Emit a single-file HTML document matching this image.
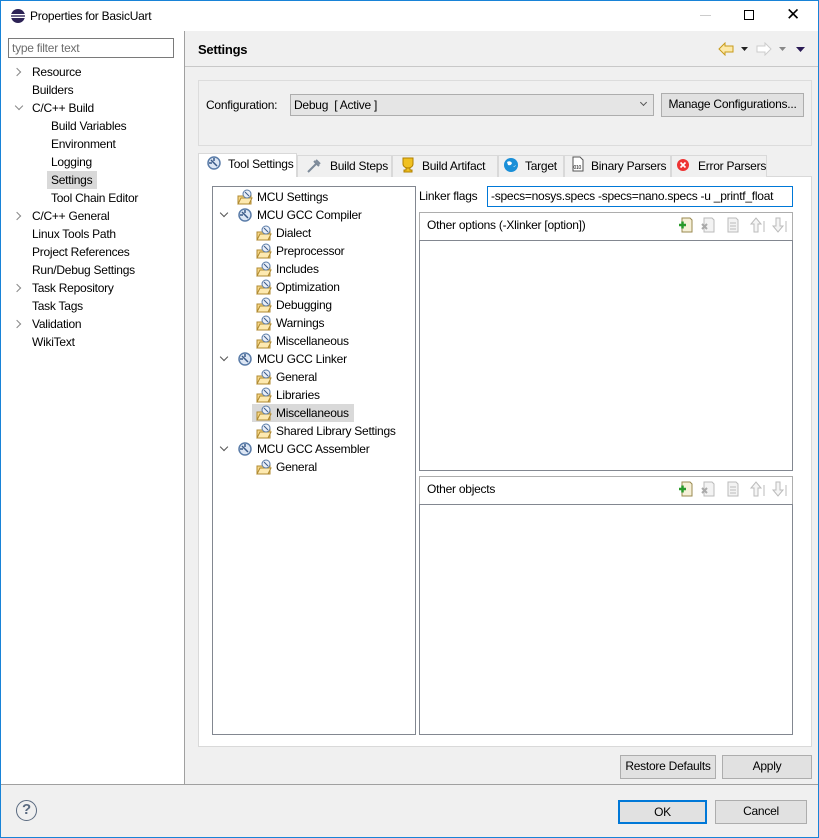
<!DOCTYPE html>
<html><head><meta charset="utf-8"><style>
*{box-sizing:border-box;margin:0;padding:0}
body{width:819px;height:838px;position:relative;overflow:hidden;font-family:"Liberation Sans",sans-serif;font-size:12px;letter-spacing:-0.25px;color:#000;background:#f0f0f0}
.a{position:absolute}
.t{position:absolute;white-space:nowrap;line-height:18px}
.btn{position:absolute;background:#e1e1e1;border:1px solid #adadad;text-align:center;line-height:21px}
.chev{position:absolute;width:6px;height:6px;border-right:1.5px solid #888;border-bottom:1.5px solid #888}
.tab{position:absolute;top:155px;height:22px;background:#f0f0f0;border:1px solid #d9d9d9;border-bottom:none;line-height:20px;padding-left:6px;white-space:nowrap}
.ic{position:absolute;width:16px;height:16px}
</style></head><body>
<div class="a" style="left:0;top:0;width:819px;height:838px;border:1px solid #1883d7;z-index:10;pointer-events:none"></div>
<div class="a" style="left:0;top:0;width:819px;height:31px;background:#fff"></div>
<svg class="a" style="left:10px;top:8px" width="16" height="16" viewBox="0 0 16 16"><circle cx="8" cy="8" r="7" fill="#2c2255"/><rect x="1" y="6" width="14" height="1.3" fill="#fff"/><rect x="1" y="8.7" width="14" height="1.3" fill="#fff"/></svg>
<div class="t" style="left:30px;top:7px;font-size:12px">Properties for BasicUart</div>
<div class="a" style="left:700px;top:15px;width:11px;height:1px;background:#ccc"></div>
<div class="a" style="left:744px;top:10px;width:10px;height:10px;border:1px solid #000"></div>
<div class="t" style="left:786px;top:5px;font-size:17px;line-height:20px">✕</div>
<div class="a" style="left:1px;top:31px;width:183px;height:753px;background:#fff"></div>
<div class="a" style="left:184px;top:31px;width:1px;height:753px;background:#a0a0a0"></div>
<div class="a" style="left:8px;top:38px;width:166px;height:20px;border:1px solid #7a7a7a;background:#fff"></div>
<div class="t" style="left:12px;top:39px;color:#6d6d6d">type filter text</div>
<div class="chev" style="left:14px;top:69px;transform:rotate(-45deg)"></div>
<div class="t" style="left:32px;top:63px">Resource</div>
<div class="t" style="left:32px;top:81px">Builders</div>
<div class="chev" style="left:16px;top:103px;transform:rotate(45deg)"></div>
<div class="t" style="left:32px;top:99px">C/C++ Build</div>
<div class="t" style="left:51px;top:117px">Build Variables</div>
<div class="t" style="left:51px;top:135px">Environment</div>
<div class="t" style="left:51px;top:153px">Logging</div>
<div class="a" style="left:47px;top:171px;width:50px;height:18px;background:#d9d9d9"></div>
<div class="t" style="left:51px;top:171px">Settings</div>
<div class="t" style="left:51px;top:189px">Tool Chain Editor</div>
<div class="chev" style="left:14px;top:213px;transform:rotate(-45deg)"></div>
<div class="t" style="left:32px;top:207px">C/C++ General</div>
<div class="t" style="left:32px;top:225px">Linux Tools Path</div>
<div class="t" style="left:32px;top:243px">Project References</div>
<div class="t" style="left:32px;top:261px">Run/Debug Settings</div>
<div class="chev" style="left:14px;top:285px;transform:rotate(-45deg)"></div>
<div class="t" style="left:32px;top:279px">Task Repository</div>
<div class="t" style="left:32px;top:297px">Task Tags</div>
<div class="chev" style="left:14px;top:321px;transform:rotate(-45deg)"></div>
<div class="t" style="left:32px;top:315px">Validation</div>
<div class="t" style="left:32px;top:333px">WikiText</div>
<div class="t" style="left:198px;top:41px;font-weight:bold;font-size:13px">Settings</div>
<div class="a" style="left:185px;top:66px;width:633px;height:1px;background:#c8c8c8"></div>
<svg class="a" style="left:718px;top:42px" width="90" height="14" viewBox="0 0 90 14"><path d="M1 7 L7 1 V4 H15 V10 H7 V13 Z" fill="#fde9a8" stroke="#c79a1a"/><path d="M23 5 h7 l-3.5 4z" fill="#222"/><path d="M53 7 L47 1 V4 H39 V10 H47 V13 Z" fill="#fff" stroke="#ccc"/><path d="M61 5 h7 l-3.5 4z" fill="#888"/><path d="M78 5 h9 l-4.5 5z" fill="#2a1a55"/></svg>
<div class="a" style="left:198px;top:80px;width:614px;height:66px;border:1px solid #dcdcdc"></div>
<div class="t" style="left:206px;top:96px">Configuration:</div>
<div class="a" style="left:290px;top:94px;width:364px;height:22px;border:1px solid #adadad;background:#e5e5e5"></div>
<div class="t" style="left:294px;top:96px">Debug&nbsp; [ Active ]</div>
<div class="chev" style="left:641px;top:100px;transform:rotate(45deg);border-color:#555;width:5px;height:5px;border-width:1px"></div>
<div class="btn" style="left:661px;top:93px;width:143px;height:24px">Manage Configurations...</div>
<div class="a" style="left:198px;top:176px;width:614px;height:571px;background:#fff;border:1px solid #d9d9d9"></div>
<div class="tab" style="left:198px;top:153px;width:99px;height:24px;background:#fff;padding-left:29px;line-height:20px">Tool Settings</div>
<svg class="ic" style="left:206px;top:155px" viewBox="0 0 16 16"><circle cx="8" cy="8" r="6" fill="#dce6f4" stroke="#5a7ca8" stroke-width="1.5"/><path d="M5 5 L11 11 M8 3 v3 M3 8 h3" stroke="#3a5a88" stroke-width="1.5"/></svg>
<div class="tab" style="left:297px;width:95px;padding-left:32px">Build Steps</div>
<svg class="ic" style="left:306px;top:158px" viewBox="0 0 16 16"><path d="M2 14 L10 6 M8 3 l5 5 M10 2 l4 4" stroke="#7d8a99" stroke-width="2"/></svg>
<div class="tab" style="left:392px;width:106px;padding-left:29px">Build Artifact</div>
<svg class="ic" style="left:400px;top:157px" viewBox="0 0 16 16"><path d="M3 1 h10 v6 a5 4 0 0 1 -10 0z M6 11 h4 v2 h2 v2 h-8 v-2 h2z" fill="#f0c020" stroke="#b08000"/></svg>
<div class="tab" style="left:498px;width:66px;padding-left:26px">Target</div>
<svg class="ic" style="left:503px;top:157px" viewBox="0 0 16 16"><circle cx="8" cy="8" r="7" fill="#1a8fd8"/><path d="M4 5 q3-2 5 1 q-1 3 -4 2z M10 10 q2 0 3 -2" fill="#fff"/></svg>
<div class="tab" style="left:564px;width:107px;padding-left:26px">Binary Parsers</div>
<svg class="ic" style="left:570px;top:156px" viewBox="0 0 16 16"><path d="M3 1 h7 l3 3 v11 h-10z" fill="#fff" stroke="#555"/><text x="3.5" y="13" font-size="5" font-family="Liberation Sans">010</text></svg>
<div class="tab" style="left:671px;width:96px;padding-left:26px">Error Parsers</div>
<svg class="ic" style="left:676px;top:158px" viewBox="0 0 16 16"><circle cx="7" cy="7" r="6" fill="#e33"/><path d="M4.5 4.5 l5 5 M9.5 4.5 l-5 5" stroke="#fff" stroke-width="1.6"/></svg>
<div class="a" style="left:212px;top:186px;width:204px;height:549px;border:1px solid #828790;background:#fff"></div>
<div class="a" style="left:252px;top:404px;width:102px;height:18px;background:#d9d9d9"></div>
<div id="tree"></div>
<div class="t" style="left:419px;top:187px">Linker flags</div>
<div class="a" style="left:487px;top:186px;width:306px;height:21px;border:1px solid #0078d7;background:#fff"></div>
<div class="t" style="left:491px;top:187px">-specs=nosys.specs -specs=nano.specs -u _printf_float</div>
<div class="a" style="left:419px;top:212px;width:374px;height:29px;border:1px solid #adadad;background:#fff"></div>
<div class="t" style="left:427px;top:216px">Other options (-Xlinker [option])</div>
<div class="a" style="left:419px;top:240px;width:374px;height:231px;border:1px solid #828790;background:#fff"></div>
<div class="a" style="left:419px;top:476px;width:374px;height:29px;border:1px solid #adadad;background:#fff"></div>
<div class="t" style="left:427px;top:480px">Other objects</div>
<div class="a" style="left:419px;top:504px;width:374px;height:231px;border:1px solid #828790;background:#fff"></div>
<svg class="a" style="left:678px;top:216px" width="112" height="18" viewBox="0 0 112 18"><g id="tb"><path d="M4 2 h8 l2 2 v12 h-10z" fill="#f6f0d8" stroke="#9a8a50"/><path d="M1 9 h7 M4.5 5.5 v7" stroke="#2a9a2a" stroke-width="2.5"/><path d="M26 2 h8 l2 2 v12 h-10z" fill="#f3f3f3" stroke="#bbb"/><path d="M24 8 l5 5 M29 8 l-5 5" stroke="#aaa" stroke-width="2"/><path d="M50 2 h8 l2 2 v12 h-10z" fill="#f3f3f3" stroke="#bbb"/><path d="M52 7 h6 M52 10 h6 M52 13 h6" stroke="#bbb"/><path d="M76 16 v-8 h-3 l5-6 5 6 h-3 v8z" fill="#f5f5f5" stroke="#bbb"/><path d="M86 5 v11" stroke="#bbb"/><path d="M98 2 v8 h-3 l5 6 5-6 h-3 v-8z" fill="#f5f5f5" stroke="#bbb"/><path d="M108 5 v11" stroke="#bbb"/></g></svg>
<svg class="a" style="left:678px;top:480px" width="112" height="18" viewBox="0 0 112 18"><use href="#tb"/></svg>
<div class="btn" style="left:620px;top:755px;width:96px;height:24px">Restore Defaults</div>
<div class="btn" style="left:722px;top:755px;width:90px;height:24px">Apply</div>
<div class="a" style="left:1px;top:784px;width:817px;height:1px;background:#a0a0a0"></div>
<div class="a" style="left:16px;top:800px;width:21px;height:21px;border:1.5px solid #5a6a80;border-radius:50%;text-align:center;line-height:18px;font-size:15px;color:#5a6a80;font-weight:bold">?</div>
<div class="btn" style="left:618px;top:800px;width:89px;height:24px;border:2px solid #0078d7;line-height:20px">OK</div>
<div class="btn" style="left:715px;top:800px;width:92px;height:24px">Cancel</div>
<script>
var items=[[0,0,"MCU Settings"],[0,1,"MCU GCC Compiler"],[1,0,"Dialect"],[1,0,"Preprocessor"],[1,0,"Includes"],[1,0,"Optimization"],[1,0,"Debugging"],[1,0,"Warnings"],[1,0,"Miscellaneous"],[0,1,"MCU GCC Linker"],[1,0,"General"],[1,0,"Libraries"],[1,0,"Miscellaneous"],[1,0,"Shared Library Settings"],[0,1,"MCU GCC Assembler"],[1,0,"General"]];
var h="";
items.forEach(function(it,i){var y=188+i*18;var ix=it[0]?256:237;
if(it[1]){h+='<div class="chev" style="left:221px;top:'+(y+4)+'px;transform:rotate(45deg);border-color:#555"></div>';
h+='<svg class="ic" style="left:'+ix+'px;top:'+(y+1)+'px" viewBox="0 0 16 16"><circle cx="8" cy="8" r="6" fill="#dce6f4" stroke="#5a7ca8" stroke-width="1.5"/><path d="M5 5 L11 11 M8 3 v3 M3 8 h3" stroke="#3a5a88" stroke-width="1.5"/></svg>';}
else{h+='<svg class="ic" style="left:'+ix+'px;top:'+(y+1)+'px" viewBox="0 0 16 16"><path d="M1 7 h5 l1 -1 h7 v9 h-13z" fill="#f8d888" stroke="#b08a30"/><path d="M1 15 l3-6 h11 l-3 6z" fill="#fde9b0" stroke="#b08a30"/><circle cx="10" cy="5" r="4" fill="#e8eef8" stroke="#5a7ca8"/><path d="M8 3 l4 4" stroke="#3a5a88"/></svg>';}
h+='<div class="t" style="left:'+(ix+20)+'px;top:'+y+'px">'+it[2]+'</div>';});
document.getElementById("tree").innerHTML=h;
</script>
</body></html>
